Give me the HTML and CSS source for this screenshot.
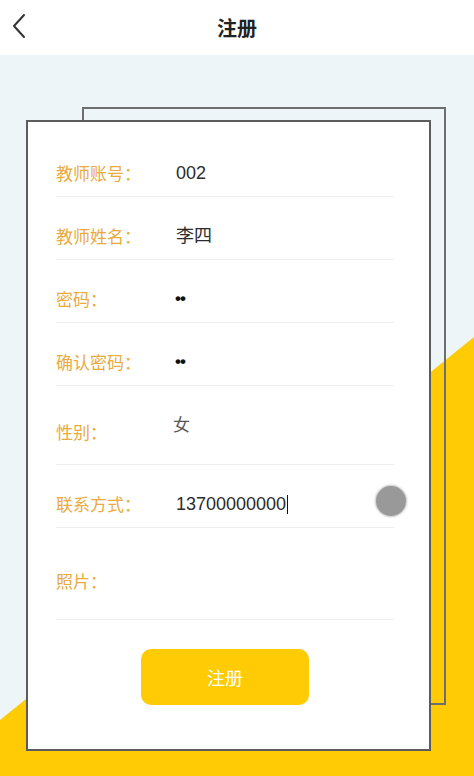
FILE: index.html
```html
<!DOCTYPE html>
<html lang="zh-CN">
<head>
<meta charset="utf-8">
<title>注册</title>
<link rel="stylesheet" href="styles.css">
</head>
<body>
<header class="topbar">
  <span class="back">
    <svg width="16" height="26" viewBox="0 0 16 26"><path d="M13 2 L3 13 L13 24" fill="none" stroke="#333" stroke-width="2" stroke-linecap="round" stroke-linejoin="round"/></svg>
  </span>
  <h1 class="title">注册</h1>
</header>
<main class="stage">
  <div class="back-card"></div>
  <section class="card">
    <div class="row"><span class="label">教师账号：</span><span class="value">002</span></div>
    <div class="row"><span class="label">教师姓名：</span><span class="value">李四</span></div>
    <div class="row"><span class="label">密码：</span><span class="value dots">••</span></div>
    <div class="row"><span class="label">确认密码：</span><span class="value dots">••</span></div>
    <div class="row r5"><span class="label low">性别：</span><span class="value gender">女</span></div>
    <div class="row"><span class="label">联系方式：</span><span class="value">13700000000<span class="caret"></span></span><span class="ball"></span></div>
    <div class="row r7"><span class="label">照片：</span></div>
    <div class="actions"><button class="submit">注册</button></div>
  </section>
</main>
</body>
</html>
```

FILE: styles.css
```css
* { box-sizing: border-box; }
html, body { margin: 0; padding: 0; }
body {
  width: 474px;
  height: 776px;
  overflow: hidden;
  background: #fff;
  font-family: "Liberation Sans", "Noto Sans CJK SC", sans-serif;
  color: #333;
}
.topbar {
  height: 55px;
  display: flex;
  align-items: center;
  justify-content: center;
  position: relative;
  background: #fff;
}
.back {
  position: absolute;
  left: 11px;
  top: 13px;
  display: block;
  line-height: 0;
}
.title {
  margin: 0;
  font-size: 20px;
  font-weight: bold;
  color: #222;
  font-family: "Noto Sans CJK SC", sans-serif;
}
.stage {
  position: relative;
  height: 721px;
  background: #edf5f9;
  padding: 65px 0 0 26px;
}
.stage::before {
  content: "";
  position: absolute;
  inset: 0;
  background: #ffcb05;
  clip-path: polygon(0 665px, 100% 282px, 100% 100%, 0 100%);
}
.back-card {
  position: absolute;
  left: 82px;
  top: 52px;
  width: 364px;
  height: 598px;
  border: 2px solid #6e6e6e;
}
.card {
  position: relative;
  width: 405px;
  height: 631px;
  background: #fff;
  border: 2px solid #5c5c5c;
  padding: 12px 35px 0 28px;
}
.row {
  display: flex;
  align-items: center;
  height: 63px;
  padding: 27px 0 11px;
  line-height: 24px;
  border-bottom: 1px solid #efefef;
}
.row.r5 {
  height: 79px;
  align-items: flex-start;
  padding: 26px 0 19px;
}
.row.r7 { height: 92px; padding: 41px 0 26px; }
.label {
  width: 120px;
  flex: none;
  font-size: 17px;
  line-height: 24px;
  color: #e9aa3e;
  font-family: "Noto Sans CJK SC", sans-serif;
}
.label.low { margin-top: 8px; }
.value {
  font-size: 18px;
  line-height: 24px;
  color: #2b2b2b;
  display: flex;
  align-items: center;
}
.dots {
  font-size: 17px;
  font-weight: bold;
  color: #111;
  letter-spacing: -1px;
  margin-left: -1px;
}
.gender {
  font-size: 17px;
  color: #555;
  font-family: "Noto Sans CJK SC", sans-serif;
  margin-left: -3px;
}
.caret {
  display: inline-block;
  width: 1px;
  height: 19px;
  background: #111;
  margin-left: 1px;
}
.ball {
  flex: none;
  width: 30px;
  height: 30px;
  border-radius: 50%;
  background: #999;
  box-shadow: 0 0 2px 1px rgba(153,153,153,0.6);
  margin: -6px -12px 0 auto;
}
.actions {
  display: flex;
  justify-content: center;
  padding-top: 29px;
}
.submit {
  width: 168px;
  height: 56px;
  border: none;
  border-radius: 10px;
  background: #ffcb05;
  color: #fff;
  font-size: 18px;
  font-family: "Noto Sans CJK SC", sans-serif;
  padding: 0;
}
```
